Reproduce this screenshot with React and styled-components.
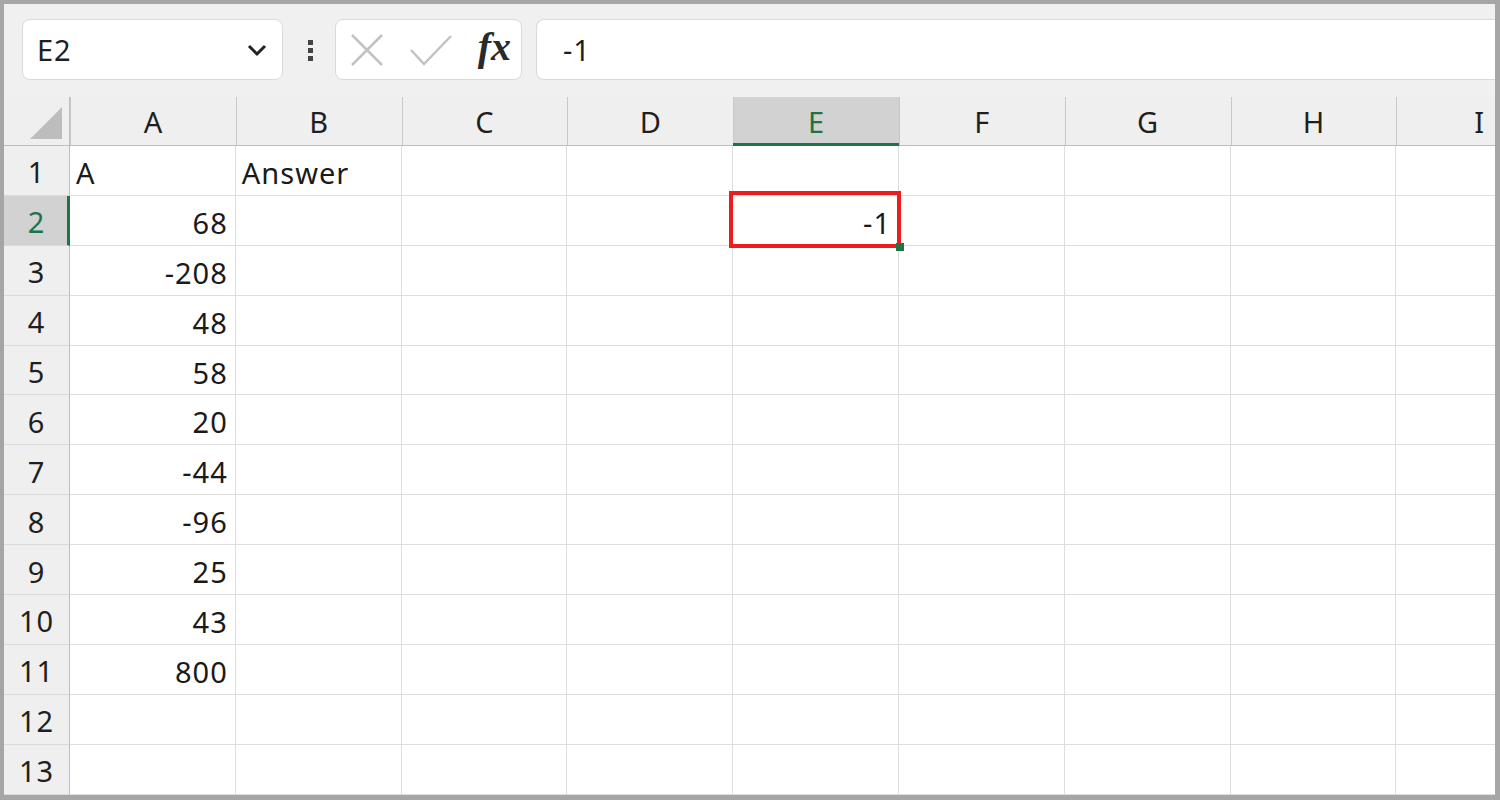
import React from 'react';
import styled, { createGlobalStyle } from 'styled-components';

const GlobalStyle = createGlobalStyle`
  html, body {
    margin: 0;
    padding: 0;
    background: #a6a6a6;
  }
  body {
    font-family: "Noto Sans", "Open Sans", sans-serif;
  }
`;

const COLS = ['A', 'B', 'C', 'D', 'E', 'F', 'G', 'H', 'I'];
const VALUES = { 2: 68, 3: -208, 4: 48, 5: 58, 6: 20, 7: -44, 8: -96, 9: 25, 10: 43, 11: 800 };
const ROWS = Array.from({ length: 13 }, (_, i) => i + 1);

const Frame = styled.div`
  width: 1500px;
  height: 800px;
  box-sizing: border-box;
  padding: 4px 5px 5px 4px;
  background: #a6a6a6;
  overflow: hidden;
`;

const Window = styled.div`
  width: 100%;
  height: 100%;
  background: #f0f0f0;
  overflow: hidden;
  display: flex;
  flex-direction: column;
`;

const Toolbar = styled.div`
  display: flex;
  align-items: center;
  height: 93px;
  padding: 0 0 0 18px;
  box-sizing: border-box;
  flex-shrink: 0;
`;

const Box = styled.div`
  display: flex;
  align-items: center;
  height: 61px;
  box-sizing: border-box;
  background: #fff;
  border: 1px solid #dadada;
  border-radius: 8px;
  margin-top: -2px;
`;

const NameBox = styled(Box)`
  width: 261px;
  padding: 0 14px 0 14px;
  justify-content: space-between;
  font-size: 29px;
  letter-spacing: 1px;
  color: #1f1f1f;
`;

const Dots = styled.div`
  display: flex;
  flex-direction: column;
  gap: 3px;
  margin: 0 22px 0 25px;
  span {
    width: 5px;
    height: 5px;
    background: #444;
  }
`;

const FxBox = styled(Box)`
  width: 187px;
  padding: 0 10px 0 14px;
  justify-content: space-between;
`;

const Fx = styled.span`
  font-family: "Liberation Serif", "DejaVu Serif", serif;
  font-style: italic;
  font-weight: bold;
  font-size: 40px;
  color: #2a2a2a;
  letter-spacing: 0px;
  margin-top: -6px;
`;

const FormulaBar = styled(Box)`
  flex: 1;
  margin-left: 14px;
  padding-left: 26px;
  border-right: none;
  border-radius: 8px 0 0 8px;
  font-size: 29px;
  letter-spacing: 1px;
  color: #1f1f1f;
`;

const Grid = styled.div`
  display: grid;
  grid-template-columns: 66px repeat(9, 165.8px);
  grid-template-rows: 49px repeat(13, 49.9px);
  background: #fff;
  position: relative;
`;

const Corner = styled.div`
  background: #efefef;
  border-right: 1px solid #bdbdbd;
  border-bottom: 1px solid #bdbdbd;
  display: flex;
  align-items: flex-end;
  justify-content: flex-end;
  padding: 0 7px 6px 0;
  box-sizing: border-box;
`;

const ColHead = styled.div`
  background: ${p => (p.$active ? '#d2d2d2' : '#efefef')};
  color: ${p => (p.$active ? '#217346' : '#1f1f1f')};
  border-bottom: ${p => (p.$active ? '3px solid #217346' : '1px solid #bdbdbd')};
  box-sizing: border-box;
  font-size: 29px;
  display: flex;
  align-items: center;
  justify-content: center;
  padding-top: ${p => (p.$active ? '2px' : '0')};
  position: relative;
  &::before {
    content: '';
    position: absolute;
    left: 0;
    top: 0;
    bottom: 0;
    width: 1px;
    background: #c8c8c8;
  }
`;

const RowHead = styled.div`
  background: ${p => (p.$active ? '#d2d2d2' : '#efefef')};
  color: ${p => (p.$active ? '#217346' : '#1f1f1f')};
  border-right: ${p => (p.$active ? '3px solid #217346' : '1px solid #bdbdbd')};
  border-bottom: 1px solid #dadada;
  box-sizing: border-box;
  font-size: 29px;
  letter-spacing: 1px;
  display: flex;
  align-items: center;
  justify-content: center;
  padding: 3px 0 0 ${p => (p.$active ? '2px' : '0')};
`;

const Cell = styled.div`
  border-right: 1px solid #dedede;
  border-bottom: 1px solid #dedede;
  box-sizing: border-box;
  font-size: 29px;
  letter-spacing: 1px;
  color: #1a1a1a;
  display: flex;
  align-items: center;
  justify-content: ${p => (p.$num ? 'flex-end' : 'flex-start')};
  padding: 4px 7px 0 6px;
  white-space: nowrap;
  position: relative;
`;

const Selection = styled.div`
  position: absolute;
  inset: -5px -3px -3px -4px;
  border: 4px solid #ee1c1c;
  pointer-events: none;
  z-index: 2;
  &::after {
    content: '';
    position: absolute;
    right: -7px;
    bottom: -7px;
    width: 8px;
    height: 8px;
    background: #217346;
  }
`;

const App = () => {
  return (
    <Frame>
      <GlobalStyle />
      <Window>
        <Toolbar>
          <NameBox>
            <span>E2</span>
            <svg width="22" height="14" viewBox="0 0 22 14">
              <path d="M3 3 L11 11 L19 3" fill="none" stroke="#222" strokeWidth="3" />
            </svg>
          </NameBox>
          <Dots>
            <span />
            <span />
            <span />
          </Dots>
          <FxBox>
            <svg width="34" height="34" viewBox="0 0 34 34">
              <path d="M2 2 L32 32 M32 2 L2 32" stroke="#c2c2c2" strokeWidth="2.5" />
            </svg>
            <svg width="44" height="34" viewBox="0 0 44 34">
              <path d="M2 17 L15 31 L42 3" fill="none" stroke="#c2c2c2" strokeWidth="2.5" />
            </svg>
            <Fx>fx</Fx>
          </FxBox>
          <FormulaBar>-1</FormulaBar>
        </Toolbar>
        <Grid>
          <Corner>
            <svg width="32" height="32" viewBox="0 0 32 32">
              <path d="M32 0 L32 32 L0 32 Z" fill="#bdbdbd" />
            </svg>
          </Corner>
          {COLS.map(c => (
            <ColHead key={c} $active={c === 'E'}>{c}</ColHead>
          ))}
          {ROWS.map(r => (
            <React.Fragment key={r}>
              <RowHead $active={r === 2}>{r}</RowHead>
              {COLS.map(c => {
                let content = null;
                let num = false;
                if (r === 1 && c === 'A') content = 'A';
                if (r === 1 && c === 'B') content = 'Answer';
                if (c === 'A' && VALUES[r] !== undefined) {
                  content = VALUES[r];
                  num = true;
                }
                if (r === 2 && c === 'E') {
                  content = -1;
                  num = true;
                }
                return (
                  <Cell key={c} $num={num}>
                    {content}
                    {r === 2 && c === 'E' && <Selection />}
                  </Cell>
                );
              })}
            </React.Fragment>
          ))}
        </Grid>
      </Window>
    </Frame>
  );
};

export default App;
